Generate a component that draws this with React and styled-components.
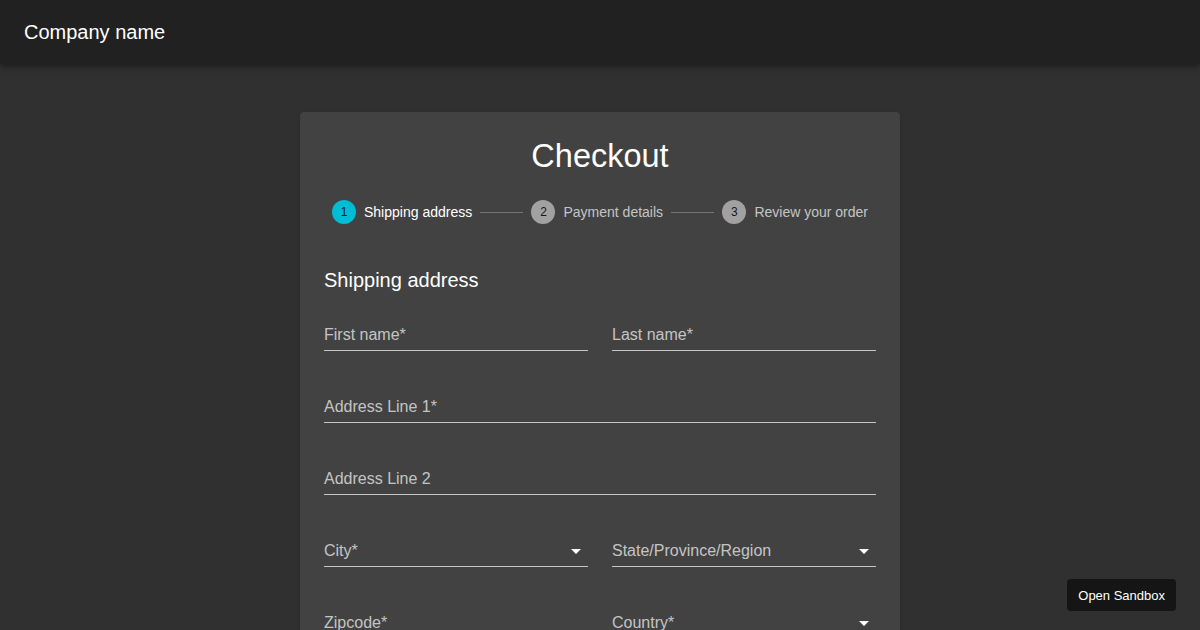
import React from "react";
import styled, { createGlobalStyle } from "styled-components";

const GlobalStyle = createGlobalStyle`
  body {
    margin: 0;
    background: #303030;
    color: #fff;
    font-family: "Liberation Sans", Arial, sans-serif;
    overflow: hidden;
  }
`;

const steps = ["Shipping address", "Payment details", "Review your order"];

const fields = [
  [{ label: "First name*" }, { label: "Last name*" }],
  [{ label: "Address Line 1*", full: true }],
  [{ label: "Address Line 2", full: true }],
  [
    { label: "City*", select: true },
    { label: "State/Province/Region", select: true },
  ],
  [{ label: "Zipcode*" }, { label: "Country*", select: true }],
];

function ArrowDrop() {
  return (
    <svg width="24" height="24" viewBox="0 0 24 24" fill="currentColor">
      <path d="M7 10l5 5 5-5z" />
    </svg>
  );
}

function App() {
  return (
    <>
      <GlobalStyle />
      <AppBar>
        <Brand>Company name</Brand>
      </AppBar>
      <Main>
        <Paper>
          <Title>Checkout</Title>
          <Stepper>
            {steps.map((step, index) => (
              <React.Fragment key={step}>
                {index > 0 && <Connector />}
                <Step>
                  <StepIcon $active={index === 0}>{index + 1}</StepIcon>
                  <StepLabel $active={index === 0}>{step}</StepLabel>
                </Step>
              </React.Fragment>
            ))}
          </Stepper>
          <Heading>Shipping address</Heading>
          <FormGrid>
            {fields.flat().map(({ label, full, select }) => (
              <Field key={label} $full={full}>
                <FieldLabel>{label}</FieldLabel>
                {select && (
                  <SelectIcon>
                    <ArrowDrop />
                  </SelectIcon>
                )}
              </Field>
            ))}
          </FormGrid>
        </Paper>
      </Main>
      <SandboxButton>Open Sandbox</SandboxButton>
    </>
  );
}

const AppBar = styled.header`
  height: 64px;
  display: flex;
  align-items: center;
  padding: 0 24px;
  background: #212121;
  box-shadow: 0 2px 4px -1px rgba(0, 0, 0, 0.2), 0 4px 5px 0 rgba(0, 0, 0, 0.14),
    0 1px 10px 0 rgba(0, 0, 0, 0.12);
`;

const Brand = styled.h6`
  margin: 0;
  font-size: 20px;
  font-weight: 400;
  line-height: 1.6;
`;

const Main = styled.main`
  width: 600px;
  margin: 48px auto;
`;

const Paper = styled.section`
  background: #424242;
  border-radius: 4px;
  padding: 24px;
  box-shadow: 0 2px 1px -1px rgba(0, 0, 0, 0.2), 0 1px 1px 0 rgba(0, 0, 0, 0.14),
    0 1px 3px 0 rgba(0, 0, 0, 0.12);
`;

const Title = styled.h4`
  margin: 0;
  text-align: center;
  font-size: 32.5px;
  font-weight: 400;
  line-height: 40px;
`;

const Stepper = styled.div`
  display: flex;
  align-items: center;
  padding: 24px 0 40px;
`;

const Step = styled.div`
  display: flex;
  align-items: center;
  padding: 0 8px;
`;

const StepIcon = styled.span`
  width: 24px;
  height: 24px;
  border-radius: 50%;
  display: flex;
  align-items: center;
  justify-content: center;
  font-size: 12px;
  color: rgba(0, 0, 0, 0.87);
  background: ${({ $active }) => ($active ? "#00bcd4" : "rgba(255,255,255,0.5)")};
`;

const StepLabel = styled.span`
  padding-left: 8px;
  font-size: 14px;
  line-height: 1.43;
  color: ${({ $active }) => ($active ? "#fff" : "rgba(255,255,255,0.7)")};
`;

const Connector = styled.span`
  flex: 1;
  border-top: 1px solid #757575;
`;

const Heading = styled.h6`
  margin: 0 0 7px;
  font-size: 20px;
  font-weight: 400;
  line-height: 1.6;
`;

const FormGrid = styled.div`
  display: grid;
  grid-template-columns: 1fr 1fr;
  gap: 24px;
`;

const Field = styled.div`
  position: relative;
  grid-column: ${({ $full }) => ($full ? "1 / -1" : "auto")};
  height: 47px;
  border-bottom: 1px solid rgba(255, 255, 255, 0.7);
`;

const FieldLabel = styled.label`
  display: block;
  padding-top: 20px;
  font-size: 16px;
  line-height: 23px;
  color: rgba(255, 255, 255, 0.7);
`;

const SelectIcon = styled.span`
  position: absolute;
  right: 0;
  top: 20px;
  color: #fff;
  display: flex;
`;

const SandboxButton = styled.button`
  position: fixed;
  right: 24px;
  bottom: 19px;
  height: 32px;
  padding: 0 11px;
  border: none;
  border-radius: 4px;
  background: #151515;
  color: #fff;
  font-family: "Liberation Sans", Arial, sans-serif;
  font-size: 13px;
`;

export default App;
